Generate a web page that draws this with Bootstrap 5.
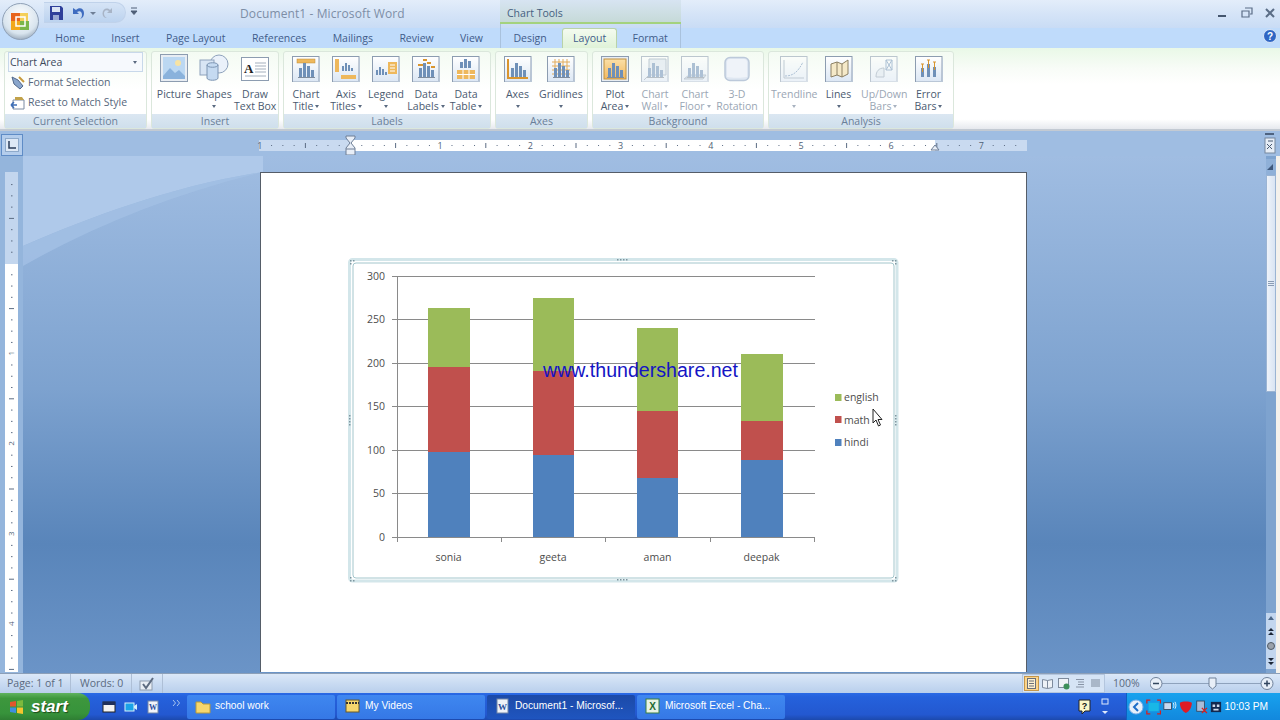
<!DOCTYPE html>
<html lang="en">
<head>
  <meta charset="UTF-8" />
  <title>Document1 - Microsoft Word</title>
  <link href="https://cdn.jsdelivr.net/npm/bootstrap@5.3.3/dist/css/bootstrap.min.css" rel="stylesheet" />
  <style>
    html, body { height: 100%; overflow: hidden; }
    body { font-family: "Open Sans", "Noto Sans", "Liberation Sans", sans-serif; font-size: 10.5px; color: #4a5a70; background: #9dbbe0; }
    .word-win { width: 1280px; height: 720px; position: relative; overflow: hidden; }
    /* title bar */
    .title-row { height: 28px; background: linear-gradient(#e3edfa, #d5e4f7 50%, #c9dcf5); padding-left: 44px; }
    .qat { width: 82px; height: 21px; margin-top: 2px; border-radius: 0 12px 12px 0; background: linear-gradient(#d6e4f6, #bcd3ef); border: 1px solid #c0d2ea; border-left: 0; padding-left: 4px; gap: 5px; }
    .qat-more { width: 14px; margin-left: 2px; margin-top: 7px; }
    .doc-title { margin-left: 98px; width: 260px; font-size: 12px; line-height: 27px; color: #7d8ea6; letter-spacing: .1px; }
    .chart-tools { width: 181px; height: 24px; background: linear-gradient(#d7e4f2, #c6dad8); border-bottom: 2px solid #a4d27e; color: #45607f; padding: 7px 0 0 7px; line-height: 12px; }
    .tools-edge { position: absolute; left: 500px; top: 24px; width: 181px; height: 24px; border-left: 1px solid #a9c2dd; border-right: 1px solid #a9c2dd; pointer-events: none; }
    .win-btns { position: absolute; top: 6px; right: 4px; gap: 10px; }
    .office-btn { position: absolute; left: 2px; top: 3px; width: 37px; height: 37px; }
    /* tabs */
    .tab-row { height: 20px; background: #bfdbfb; padding-left: 42px; }
    .rb-tab { padding: 0 13.2px; line-height: 20px; color: #3f5c8a; font-size: 10.5px; white-space: nowrap; text-decoration: none; }
    .rb-tab.on { background: linear-gradient(#f4fbef, #dff2d8); border: 1px solid #b9d3a8; border-bottom: 0; border-radius: 3px 3px 0 0; line-height: 19px; padding: 0 10.2px; margin: 0 2px; color: #3f5c8a; }
    .help-ico { position: absolute; right: 3px; top: 29px; }
    /* ribbon */
    .ribbon { height: 83px; padding: 3px 0 0 4px; gap: 4px; background: linear-gradient(#e9f8e7, #f8fcf7 25%, #fff 45%, #fff 88%, #e6e9ee); border-bottom: 2px solid #c3cad3; }
    .rb-group { height: 78px; border: 1px solid #dbe7dc; border-radius: 3px; background: linear-gradient(#f4fbf3, #fff 50%); }
    .rb-body { height: 63px; padding-left: 2px; }
    .rb-foot { height: 14px; line-height: 14px; background: linear-gradient(#dbe7f2, #cfdfec); text-align: center; color: #6a7f99; font-size: 10.5px; }
    .g-sel { width: 143px; } .g-ins { width: 128px; } .g-lab { width: 208px; } .g-axe { width: 93px; } .g-bak { width: 172px; } .g-ana { width: 186px; }
    .rb-btn { width: 40px; padding-top: 4px; text-align: center; line-height: 12px; white-space: nowrap; color: #4a5a70; flex: none; }
    .rb-btn svg { display: block; margin: 0 auto 6px; }
    .rb-btn svg.ico-tall { margin-top: -2px; }
    .rb-btn svg.ico-box { margin-top: 1px; margin-bottom: 7px; }
    .rb-44 { width: 44px; } .rb-45 { width: 45px; } .rb-43 { width: 43px; } .rb-42 { width: 42px; }
    .rb-off { color: #9aa6b4; }
    .drop-mark { display: inline-block; border: 2.5px solid transparent; border-top: 3px solid #5a6a80; border-bottom: 0; vertical-align: 2px; margin-left: 2px; }
    .rb-off .drop-mark { border-top-color: #a8b2c0; }
    .sel-box { margin: 0 3px; height: 20px; border: 1px solid #c8d8ea; background: #f6f9fd; line-height: 18px; padding: 0 1px; color: #3d4a5c; font-size: 10.5px; }
    .sel-row { padding: 3px 0 0 5px; height: 20px; line-height: 15px; gap: 2px; color: #56667c; white-space: nowrap; }
    /* ruler row */
    .ruler-row { height: 25px; background: #9fbde2; }
    .tab-stop { width: 22px; height: 22px; margin: 3px 0 0 1px; border: 1px solid #5f8cc6; background: #b4cdec; padding: 3px; }
    .tab-stop-in { width: 14px; height: 14px; background: #dfe9f6; border: 1px solid #8eaacb; }
    .h-ruler { position: absolute; left: 255px; top: 4px; }
    .split-ico { position: absolute; right: 4px; top: 0; }
    /* workspace */
    .workspace { height: 517px; position: relative; background: linear-gradient(#a0bde2, #7da2cf 45%, #5985ba 75%, #6b94c7 100%); }
    .swoosh { position: absolute; left: 23px; top: 0; }
    .left-col { width: 23px; flex: none; background: #94b5dc; padding: 16px 0 0 5px; position: relative; }
    .doc-canvas { width: 1243px; flex: none; position: relative; }
    .doc-page { margin: 16px 0 0 237px; width: 767px; height: 500px; background: #fff; border: 1px solid #555d68; border-bottom: 0; padding: 84px 0 0 86px; }
    .scroll-col { width: 10px; flex: none; background: #7ea3cf; position: relative; }
    .scroll-up { height: 16px; margin-top: 3px; background: #8fb0d8; }
    .scroll-thumb { height: 217px; background: linear-gradient(90deg, #eef3fa, #d9e4f3); border: 1px solid #9bb4d3; }
    .scroll-nav { position: absolute; left: 0; bottom: 4px; width: 10px; height: 56px; background: #c2d6ef; }
    .noise-col { width: 4px; flex: none; background: #f4f1ec; }
    /* status bar */
    .status-row { height: 20px; border-top: 1px solid #8c9fb8; background: linear-gradient(#dce8f8, #c9dbf2 50%, #b9cfec); color: #5a6a80; font-size: 10.5px; line-height: 19px; }
    .st-cell { padding-left: 7px; border-right: 1px solid #aebfd6; }
    .st-page { width: 71px; } .st-words { width: 61px; padding-left: 9px; } .st-check { width: 31px; }
    .st-views { margin-left: auto; height: 19px; width: 83px; gap: 3px; padding: 2px 2px; background: #d6e4f5; border: 1px solid #b4c6de; }
    .view-ico { width: 13px; height: 13px; display: block; }
    .view-ico.on { background: #fcd58b; outline: 1px solid #c6974a; }
    .zoom-txt { width: 37px; margin-left: 8px; }
    /* taskbar */
    .task-row { height: 27px; background: linear-gradient(#2a6ae6, #2561dc 15%, #2358d0 80%, #1c49ad); font-family: "Liberation Sans", sans-serif; color: #fff; font-size: 10.2px; }
    .start-btn { width: 90px; height: 27px; border-radius: 0 12px 12px 0; background: linear-gradient(#5fb35f, #3d973d 20%, #37933b 75%, #2f7e33); font-size: 17px; line-height: 26px; font-style: italic; font-weight: 700; padding-left: 9px; gap: 6px; text-shadow: 1px 1px 1px #1c4a1c; }
    .quick-launch { width: 97px; gap: 8px; padding-left: 12px; }
    .task-btn { width: 148px; height: 24px; margin: 2px 2px 0 0; border-radius: 2px; background: linear-gradient(#3f87f0, #3578e6); padding-left: 8px; gap: 4px; line-height: 22px; white-space: nowrap; }
    .task-btn.on { background: linear-gradient(#1c4aa8, #1f55bf); }
    .tray-left { margin-left: auto; width: 48px; gap: 8px; }
    .tray { width: 154px; height: 27px; background: linear-gradient(#18a2ee, #1288dd); border-left: 1px solid #0f5fc0; padding-left: 1px; gap: 2px; white-space: nowrap; }
    .tray-clock { margin-left: auto; margin-right: 12px; }
  </style>
</head>
<body>
<svg width="0" height="0" class="position-absolute">
  <defs>
    <linearGradient id="frameFill" x1="0" y1="0" x2="0" y2="1"><stop offset="0" stop-color="#fff"/><stop offset="1" stop-color="#dce7f4"/></linearGradient>
    <linearGradient id="hotFill" x1="0" y1="0" x2="0" y2="1"><stop offset="0" stop-color="#fbe0a8"/><stop offset="1" stop-color="#f2b860"/></linearGradient>
    <symbol id="ic-frame" viewBox="0 0 28 26"><rect x=".5" y=".5" width="26.5" height="25" fill="url(#frameFill)" stroke="#8c9cb0"/><path d="M1 25.500h26.500V2" fill="none" stroke="#b9c6d6"/></symbol>
    <symbol id="ic-bars" viewBox="0 0 28 26"><path d="M7 21V12h3v9zM11 21V7h3v14zM15 21V10h3v11zM19 21V14h3v7z" fill="#6f90b8"/><path d="M6 21.500h17" stroke="#7f8c9c"/></symbol>
  </defs>
</svg>

<div class="word-win">
  <!-- title bar -->
  <div class="title-row d-flex">
    <div class="qat d-flex align-items-center">
      <svg width="16" height="16" viewBox="0 0 16 16"><path d="M2 1h11l2 2v12H2z" fill="#2f3f9a"/><path d="M4 2h8v5H4z" fill="#dbe4f4"/><path d="M5 10h6v5H5z" fill="#9aa9d4"/></svg>
      <svg width="16" height="16" viewBox="0 0 16 16"><path d="M4 3v6h6L8 7c3-2 5 0 5 3 0 2-1 3-2 4 3-1 4-3 4-6 0-5-5-6-8-3z" fill="#3f6cc0"/></svg>
      <svg width="6" height="16" viewBox="0 0 6 16"><path d="M0 7h6l-3 3z" fill="#6f7f96"/></svg>
      <svg width="14" height="16" viewBox="0 0 14 16"><path d="M11 3v5H6l2-2C5 4 3 6 3 8.500c0 2 1 3.500 3 4.500-3 0-4.500-2-4.500-4.500C1.500 4 6 2 9 5z" fill="#a8b4c6"/></svg>
    </div>
    <svg class="qat-more" width="14" height="10" viewBox="0 0 14 10"><path d="M3 1h6M3 4h6l-3 3.500z" stroke="#4f5f76" fill="#4f5f76"/></svg>
    <div class="doc-title">Document1 - Microsoft Word</div>
    <div class="chart-tools">Chart Tools</div>
  </div>
  <div class="tools-edge"></div>
  <svg class="office-btn" viewBox="0 0 37 37">
    <defs><radialGradient id="orb" cx=".5" cy=".35" r=".7"><stop offset="0" stop-color="#fff"/><stop offset=".7" stop-color="#d8e4ee"/><stop offset="1" stop-color="#8e9fb2"/></radialGradient></defs>
    <circle cx="18.500" cy="18.500" r="18" fill="url(#orb)" stroke="#8fa0b6"/>
    <path d="M9 10h9v8H9z" fill="#e8641c"/><path d="M18 10h8v8h-8z" fill="#f4c430" opacity=".8"/><path d="M9 18h9v9H9z" fill="#f2a81c"/><path d="M18 18h9v9h-9z" fill="#7ab648"/><path d="M14 14h9v9h-9z" fill="none" stroke="#fff" stroke-width="1.500"/>
  </svg>
  <div class="win-btns d-flex position-absolute">
    <svg width="14" height="14" viewBox="0 0 14 14"><path d="M2 10h8" stroke="#44566e" stroke-width="2"/></svg>
    <svg width="14" height="14" viewBox="0 0 14 14"><path d="M5 2h7v6h-2M2 5h7v6H2z" fill="none" stroke="#5b6d86" stroke-width="1.200"/></svg>
    <svg width="12" height="14" viewBox="0 0 12 14"><path d="M2 3l8 8M10 3l-8 8" stroke="#5b6d86" stroke-width="2"/></svg>
  </div>

  <!-- tabs -->
  <div class="tab-row d-flex">
    <a class="rb-tab">Home</a><a class="rb-tab">Insert</a><a class="rb-tab">Page Layout</a><a class="rb-tab">References</a><a class="rb-tab">Mailings</a><a class="rb-tab">Review</a><a class="rb-tab">View</a><a class="rb-tab ms-1">Design</a><a class="rb-tab on">Layout</a><a class="rb-tab">Format</a>
  </div>
  <svg class="help-ico position-absolute" width="14" height="14" viewBox="0 0 14 14"><circle cx="7" cy="7" r="6.500" fill="#2f66c4" stroke="#dbe6f5"/><text x="7" y="10.500" text-anchor="middle" font-size="10" font-weight="700" fill="#fff" font-family="Liberation Sans">?</text></svg>

  <!-- ribbon -->
  <div class="ribbon d-flex">
    <div class="rb-group g-sel d-flex flex-column">
      <div class="rb-body p-0">
        <div class="sel-box d-flex justify-content-between align-items-center"><span>Chart Area</span><span class="drop-mark me-1"></span></div>
        <div class="sel-row d-flex">
          <svg width="16" height="15" viewBox="0 0 16 15"><path d="M2 2l6 3 5 6-3 3-6-5z" fill="#8aa6cc" stroke="#52688a"/><path d="M9 2l5 5" stroke="#c79a3c" stroke-width="2"/></svg><span>Format Selection</span>
        </div>
        <div class="sel-row d-flex">
          <svg width="16" height="15" viewBox="0 0 16 15"><path d="M3 5h11v9H3z" fill="#fff" stroke="#7a8ba2"/><path d="M5 2h7l2 3H5z" fill="#c2a24a"/><path d="M1 10h6M1 10l3-3M1 10l3 3" stroke="#3c6db5" stroke-width="1.500" fill="none"/></svg><span>Reset to Match Style</span>
        </div>
      </div>
      <div class="rb-foot">Current Selection</div>
    </div>

    <div class="rb-group g-ins d-flex flex-column">
      <div class="rb-body d-flex">
        <div class="rb-btn"><svg class="ico-tall" width="28" height="28" viewBox="0 0 28 28"><rect x=".5" y=".5" width="27" height="27" fill="#e8edf3" stroke="#8c9cb0"/><rect x="3" y="3" width="22" height="22" fill="#bcd8f2"/><circle cx="18" cy="9" r="3" fill="#f7e3a3"/><path d="M3 22l7-8 5 5 4-3 6 6v3H3z" fill="#8ab2dc"/></svg>Picture</div>
        <div class="rb-btn"><svg class="ico-tall" width="30" height="28" viewBox="0 0 30 28"><circle cx="20" cy="10" r="9" fill="#eaf1fa" stroke="#8ea2bc"/><rect x="1" y="6" width="14" height="15" fill="#d8e5f4" stroke="#8ea2bc"/><path d="M8 11c0-3 11-3 11 0v13c0 3-11 3-11 0z" fill="#c5daf1" stroke="#7c94b2"/><path d="M8 11c0 3 11 3 11 0" fill="none" stroke="#7c94b2"/></svg>Shapes<br><span class="drop-mark m-0"></span></div>
        <div class="rb-btn rb-42"><svg class="ico-box" width="28" height="24" viewBox="0 0 28 24"><rect x=".5" y=".5" width="27" height="23" fill="#fff" stroke="#8c9cb0"/><text x="3" y="16" font-size="13" font-weight="700" font-family="Liberation Serif" fill="#222">A</text><path d="M14 6h11M14 9h11M14 12h11M14 15h11M4 19h21" stroke="#a4afbd"/></svg>Draw<br>Text Box</div>
      </div>
      <div class="rb-foot">Insert</div>
    </div>

    <div class="rb-group g-lab d-flex flex-column">
      <div class="rb-body d-flex">
        <div class="rb-btn"><svg width="28" height="26" viewBox="0 0 28 26"><use href="#ic-frame"/><rect x="5" y="3" width="18" height="4" fill="#eeb85c" stroke="#bd8a37" stroke-width=".5"/><use href="#ic-bars"/></svg>Chart<br>Title<span class="drop-mark"></span></div>
        <div class="rb-btn"><svg width="28" height="26" viewBox="0 0 28 26"><use href="#ic-frame"/><rect x="3" y="3" width="4" height="13" fill="#eeb85c"/><rect x="9" y="19" width="15" height="4" fill="#eeb85c"/><path d="M10 15v-5h2v5zM13 15V7h2v8zM16 15v-6h2v6zM19 15v-3h2v3z" fill="#6f90b8"/></svg>Axis<br>Titles<span class="drop-mark"></span></div>
        <div class="rb-btn"><svg width="28" height="26" viewBox="0 0 28 26"><use href="#ic-frame"/><rect x="16" y="6" width="9" height="12" fill="#eeb85c"/><path d="M18 9h5M18 12h5M18 15h5" stroke="#fff"/><path d="M4 19v-5h2v5zM7 19v-8h2v8zM10 19v-6h2v6zM13 19v-3h2v3z" fill="#6f90b8"/></svg>Legend<br><span class="drop-mark m-0"></span></div>
        <div class="rb-btn"><svg width="28" height="26" viewBox="0 0 28 26"><use href="#ic-frame"/><use href="#ic-bars"/><path d="M6 9h5M11 4h4M15 7h4M19 11h4" stroke="#d9952f" stroke-width="2"/></svg>Data<br>Labels<span class="drop-mark"></span></div>
        <div class="rb-btn"><svg width="28" height="26" viewBox="0 0 28 26"><use href="#ic-frame"/><path d="M8 12V6h3v6zM12 12V3h3v9zM16 12V5h3v7z" fill="#6f90b8"/><path d="M5 14h18v9H5z" fill="#eeb85c"/><path d="M5 18.500h18M11 14v9M17 14v9" stroke="#fff"/></svg>Data<br>Table<span class="drop-mark"></span></div>
      </div>
      <div class="rb-foot">Labels</div>
    </div>

    <div class="rb-group g-axe d-flex flex-column">
      <div class="rb-body d-flex p-0">
        <div class="rb-btn rb-43"><svg width="28" height="26" viewBox="0 0 28 26"><use href="#ic-frame"/><use href="#ic-bars"/><path d="M4 3v19h20" fill="none" stroke="#d9952f" stroke-width="2"/></svg>Axes<br><span class="drop-mark m-0"></span></div>
        <div class="rb-btn rb-43"><svg width="28" height="26" viewBox="0 0 28 26"><use href="#ic-frame"/><path d="M5 6h18M5 10h18M5 14h18M5 18h18M8 3v19M12 3v19M16 3v19M20 3v19" stroke="#e3ac5a"/><use href="#ic-bars"/></svg>Gridlines<br><span class="drop-mark m-0"></span></div>
      </div>
      <div class="rb-foot">Axes</div>
    </div>

    <div class="rb-group g-bak d-flex flex-column">
      <div class="rb-body d-flex">
        <div class="rb-btn"><svg width="28" height="26" viewBox="0 0 28 26"><rect x=".5" y=".5" width="27" height="25" fill="#e8edf3" stroke="#8c9cb0"/><rect x="3" y="3" width="22" height="20" fill="url(#hotFill)" stroke="#c0913f"/><use href="#ic-bars"/></svg>Plot<br>Area<span class="drop-mark"></span></div>
        <div class="rb-btn rb-off"><svg width="28" height="26" opacity=".55" viewBox="0 0 28 26"><use href="#ic-frame"/><path d="M3 24l5-5V3h17v16H8" fill="#dbe4ef" stroke="#93a3b6"/><use href="#ic-bars"/></svg>Chart<br>Wall<span class="drop-mark"></span></div>
        <div class="rb-btn rb-off"><svg width="28" height="26" opacity=".55" viewBox="0 0 28 26"><use href="#ic-frame"/><path d="M3 23l5-4h17l-3 4z" fill="#c3d1e1" stroke="#93a3b6"/><use href="#ic-bars"/></svg>Chart<br>Floor<span class="drop-mark"></span></div>
        <div class="rb-btn rb-44 rb-off"><svg width="28" height="26" viewBox="0 0 28 26"><rect x="2" y="1.500" width="24" height="23" rx="5" fill="#dfe7f2" stroke="#bcc9da" stroke-width="1.500"/><path d="M4 6c0-2 1-3 3-3h14c2 0 3 1 3 3v15c-5 1-15 1-20 0z" fill="#eff3f9"/></svg>3-D<br>Rotation</div>
      </div>
      <div class="rb-foot">Background</div>
    </div>

    <div class="rb-group g-ana d-flex flex-column">
      <div class="rb-body d-flex">
        <div class="rb-btn rb-45 rb-off"><svg width="28" height="26" opacity=".55" viewBox="0 0 28 26"><use href="#ic-frame"/><path d="M4 4v18h20" fill="none" stroke="#93a3b6"/><path d="M5 20c8 0 13-4 18-14" fill="none" stroke="#6f90b8" stroke-dasharray="2 1"/></svg>Trendline<br><span class="drop-mark m-0"></span></div>
        <div class="rb-btn rb-45"><svg width="28" height="26" viewBox="0 0 28 26"><use href="#ic-frame"/><path d="M6 8l6-2 5 2 6-4v14l-6 3-5-2-6 2z" fill="#f5e9c8" stroke="#8c8064"/><path d="M12 6v13M17 8v13" stroke="#8c8064"/></svg>Lines<br><span class="drop-mark m-0"></span></div>
        <div class="rb-btn rb-45 rb-off"><svg width="28" height="26" opacity=".55" viewBox="0 0 28 26"><use href="#ic-frame"/><path d="M6 21c0-6 3-9 8-9v9z" fill="#dbe4ef" stroke="#93a3b6"/><path d="M16 4h6v10h-6zM16 4l6 10M22 4l-6 10" fill="none" stroke="#6f90b8"/></svg>Up/Down<br>Bars<span class="drop-mark"></span></div>
        <div class="rb-btn rb-45"><svg width="28" height="26" viewBox="0 0 28 26"><use href="#ic-frame"/><path d="M6 21V12h3v9zM12 21V8h3v13zM18 21V11h3v10z" fill="#6f90b8"/><path d="M7.500 8v8M6 8h3M13.500 4v8M12 4h3M19.500 6v8M18 6h3" stroke="#d9952f"/></svg>Error<br>Bars<span class="drop-mark"></span></div>
      </div>
      <div class="rb-foot">Analysis</div>
    </div>
  </div>

  <!-- horizontal ruler -->
  <div class="ruler-row d-flex position-relative">
    <div class="tab-stop"><div class="tab-stop-in d-flex align-items-center justify-content-center"><svg width="8" height="8" viewBox="0 0 8 8"><path d="M1 0v7h7" fill="none" stroke="#2b3d5a" stroke-width="1.500"/></svg></div></div>
    <svg id="hRuler" class="h-ruler" width="780" height="20" viewBox="255 135 780 20"></svg>
    <svg class="split-ico" width="12" height="25" viewBox="0 0 12 25"><path d="M1 3h9" stroke="#33465f" stroke-width="1.500"/><rect x="1" y="7" width="10" height="15" fill="#e6edf6" stroke="#77889e"/><path d="M4 10h5M3 13l5 5M8 13l-5 5" stroke="#4a5c74"/></svg>
  </div>

  <!-- document area -->
  <div class="workspace d-flex">
    <svg class="swoosh" width="240" height="110" viewBox="0 0 240 110"><path d="M0 0H240V16C150 30 70 60 0 90z" fill="#afc9ea"/><path d="M0 90C70 60 150 30 240 16C150 38 70 70 0 110z" fill="#a2bfe4" opacity=".85"/></svg>
    <div class="left-col"><svg id="vRuler" width="14" height="500" viewBox="5 172 14 500"></svg></div>
    <div class="doc-canvas">
      <div class="doc-page">
        <svg width="553" height="327" viewBox="347 257 553 327" font-family="Open Sans, Noto Sans, sans-serif" font-size="10.5" fill="#4d4d4d">
          <!-- selection frame -->
          <rect x="349.500" y="259.500" width="547.500" height="321.500" rx="3" fill="none" stroke="#d3e6ea" stroke-width="3"/>
          <rect x="353" y="263" width="541" height="315" rx="3" fill="none" stroke="#a3c6cc"/>
          <g fill="#7f96a0">
            <path d="M617 259h1.500v1.500H617zM620 259h1.500v1.500H620zM623 259h1.500v1.500H623zM626 259h1.500v1.500H626z"/>
            <path d="M617 579h1.500v1.500H617zM620 579h1.500v1.500H620zM623 579h1.500v1.500H623zM626 579h1.500v1.500H626z"/>
            <path d="M349 415h1.500v1.500H349zM349 418h1.500v1.500H349zM349 421h1.500v1.500H349zM349 424h1.500v1.500H349z"/>
            <path d="M895 415h1.500v1.500H895zM895 418h1.500v1.500H895zM895 421h1.500v1.500H895zM895 424h1.500v1.500H895z"/>
            <path d="M350 260h1.500v1.500H350zM353 260h1.500v1.500H353zM350 263h1.500v1.500H350zM892 260h1.500v1.500H892zM895 260h1.500v1.500H895zM895 263h1.500v1.500H895zM350 577h1.500v1.500H350zM350 580h1.500v1.500H350zM353 580h1.500v1.500H353zM895 577h1.500v1.500H895zM895 580h1.500v1.500H895zM892 580h1.500v1.500H892z"/>
          </g>
          <!-- gridlines and axes -->
          <g stroke="#8a8a8a" fill="none">
            <path d="M392 276.500h423M392 319.500h423M392 363.500h423M392 406.500h423M392 450.500h423M392 493.500h423"/>
            <path d="M397.500 276v266M392 537.500h423M501.500 537v5M605.500 537v5M710.500 537v5M814.500 537v5"/>
          </g>
          <!-- stacked bars -->
          <g fill="#4f81bd"><rect x="428" y="452" width="42" height="85"/><rect x="533" y="455" width="41" height="82"/><rect x="637" y="478" width="41" height="59"/><rect x="741" y="460" width="42" height="77"/></g>
          <g fill="#c0504d"><rect x="428" y="367" width="42" height="85"/><rect x="533" y="371" width="41" height="84"/><rect x="637" y="411" width="41" height="67"/><rect x="741" y="421" width="42" height="39"/></g>
          <g fill="#9bbb59"><rect x="428" y="308" width="42" height="59"/><rect x="533" y="298" width="41" height="73"/><rect x="637" y="328" width="41" height="83"/><rect x="741" y="354" width="42" height="67"/></g>
          <g text-anchor="end"><text x="385" y="280">300</text><text x="385" y="323">250</text><text x="385" y="367">200</text><text x="385" y="410">150</text><text x="385" y="454">100</text><text x="385" y="497">50</text><text x="385" y="541">0</text></g>
          <g text-anchor="middle"><text x="448.500" y="561">sonia</text><text x="553" y="561">geeta</text><text x="657.500" y="561">aman</text><text x="761.500" y="561">deepak</text></g>
          <rect x="835" y="394" width="6.500" height="7" fill="#9bbb59"/><text x="844" y="401">english</text>
          <rect x="835" y="416" width="6.500" height="7" fill="#c0504d"/><text x="844" y="424">math</text>
          <rect x="835" y="439" width="6.500" height="7" fill="#4f81bd"/><text x="844" y="446">hindi</text>
          <text x="543" y="377" font-family="Liberation Sans, sans-serif" font-size="19.600" fill="#1414c4">www.thundershare.net</text>
          <path d="M873 409v14l3-3 2.500 6 2-1-2.500-5.500h4z" fill="#fff" stroke="#222"/>
        </svg>
      </div>
    </div>
    <div class="scroll-col">
      <div class="scroll-up d-flex justify-content-center align-items-center"><svg width="8" height="6" viewBox="0 0 8 6"><path d="M0 6l6-6v6z" fill="#3f587c"/></svg></div>
      <div class="scroll-thumb d-flex align-items-center justify-content-center"><svg width="6" height="5" viewBox="0 0 6 5"><path d="M0 .5h6M0 2.500h6M0 4.500h6" stroke="#8a9cb4"/></svg></div>
      <div class="scroll-nav d-flex flex-column align-items-center justify-content-between pb-1">
        <svg width="8" height="8" viewBox="0 0 8 8"><path d="M4 3l3 4H1z" fill="#4c6788"/></svg>
        <svg width="8" height="8" viewBox="0 0 8 8"><path d="M4 0l3 3H1zM4 4l3 3H1z" fill="#1c2738"/></svg>
        <svg width="8" height="8" viewBox="0 0 8 8"><circle cx="4" cy="4" r="3.500" fill="#9aa2ac" stroke="#4f5964"/></svg>
        <svg width="8" height="8" viewBox="0 0 8 8"><path d="M4 4L1 1h6zM4 8L1 5h6z" fill="#1c2738"/></svg>
      </div>
    </div>
    <div class="noise-col"></div>
  </div>

  <!-- status bar -->
  <div class="status-row d-flex">
    <div class="st-cell st-page">Page: 1 of 1</div>
    <div class="st-cell st-words">Words: 0</div>
    <div class="st-cell st-check d-flex align-items-center"><svg width="16" height="16" viewBox="0 0 16 16"><rect x="1" y="5" width="12" height="9" fill="#e8edf4" stroke="#8e9cae"/><path d="M4 8l3 4 7-10" fill="none" stroke="#5d6b80" stroke-width="2"/></svg></div>
    <div class="st-views d-flex">
      <svg class="view-ico on" viewBox="0 0 13 13"><rect x="2.500" y="1.500" width="8" height="10" fill="#fdf0cf" stroke="#6b6f78"/><path d="M4 4h5M4 6.500h5M4 9h5" stroke="#6b6f78"/></svg>
      <svg class="view-ico" viewBox="0 0 13 13"><path d="M1.500 2.500l5 1 5-1v8l-5 1-5-1zM6.500 3.500v8" fill="#eef2f7" stroke="#7d8a9c"/></svg>
      <svg class="view-ico" viewBox="0 0 13 13"><rect x="1.500" y="1.500" width="10" height="9" fill="#eef2f7" stroke="#7d8a9c"/><circle cx="9.500" cy="9.500" r="3" fill="#3c8f5a"/></svg>
      <svg class="view-ico" viewBox="0 0 13 13"><path d="M3 2.500h8M5 5h6M5 7.500h6M3 10h8" stroke="#8894a6"/></svg>
      <svg class="view-ico" viewBox="0 0 13 13"><path d="M2 3h9M2 5h9M2 7h9M2 9h9" stroke="#7d8a9c"/></svg>
    </div>
    <div class="zoom-txt">100%</div>
    <svg width="130" height="19" viewBox="0 0 130 19">
      <path d="M12 9.500h100" stroke="#8ea2bc"/>
      <circle cx="6" cy="9.500" r="6" fill="#e8eff8" stroke="#6f819a"/><path d="M3 9.500h6" stroke="#33465f" stroke-width="1.500"/>
      <path d="M59 4h7v8l-3.500 3-3.500-3z" fill="#e8eff8" stroke="#6f819a"/>
      <circle cx="117" cy="9.500" r="6" fill="#e8eff8" stroke="#6f819a"/><path d="M114 9.500h6M117 6.500v6" stroke="#33465f" stroke-width="1.500"/>
    </svg>
  </div>

  <!-- taskbar -->
  <div class="task-row d-flex">
    <div class="start-btn d-flex align-items-center">
      <svg width="16" height="16" viewBox="0 0 16 16"><path d="M1 3l6-1v5.500H1z" fill="#e2562d"/><path d="M8 2l6-1v6.500H8z" fill="#7db93d"/><path d="M1 8.500h6V14l-6-1z" fill="#3f8fe0"/><path d="M8 8.500h6V15l-6-1z" fill="#f5c52e"/></svg>
      <span>start</span>
    </div>
    <div class="quick-launch d-flex align-items-center">
      <svg width="14" height="14" viewBox="0 0 14 14"><rect x="1" y="2" width="12" height="10" fill="#f3f3f3" stroke="#222"/><rect x="1" y="2" width="12" height="3" fill="#1f2f5a"/></svg>
      <svg width="14" height="14" viewBox="0 0 14 14"><rect x="1" y="3" width="9" height="8" fill="#1aa3e8" stroke="#d8f0fa"/><path d="M10 6l3-2v6l-3-2z" fill="#d8f0fa"/></svg>
      <svg width="14" height="14" viewBox="0 0 14 14"><rect x="2" y="1" width="10" height="12" fill="#f2f5fa" stroke="#7386a6"/><text x="7" y="10" text-anchor="middle" font-size="8" font-weight="700" fill="#2b4f9a" font-family="Liberation Serif">W</text></svg>
      <svg width="9" height="8" viewBox="0 0 9 8" class="ms-1 mb-2"><path d="M1 1l2.500 3L1 7M5 1l2.500 3L5 7" fill="none" stroke="#a8c4ee"/></svg>
    </div>
    <div class="task-btn d-flex"><svg width="16" height="22" viewBox="0 0 16 22"><path d="M1 7h5l2 2h7v9H1z" fill="#f5d76e" stroke="#b79a3a"/></svg><span>school work</span></div>
    <div class="task-btn d-flex"><svg width="16" height="22" viewBox="0 0 16 22"><rect x="1" y="5" width="13" height="12" fill="#f5d76e" stroke="#6a5a2a"/><path d="M1 8h13" stroke="#333" stroke-width="2" stroke-dasharray="2 1"/></svg><span>My Videos</span></div>
    <div class="task-btn on d-flex"><svg width="16" height="22" viewBox="0 0 16 22"><rect x="2" y="4" width="11" height="14" fill="#eef2f8" stroke="#7386a6"/><text x="7.500" y="15" text-anchor="middle" font-size="9" font-weight="700" fill="#2b4f9a" font-family="Liberation Serif">W</text></svg><span>Document1 - Microsof...</span></div>
    <div class="task-btn d-flex"><svg width="16" height="22" viewBox="0 0 16 22"><rect x="1" y="4" width="13" height="14" fill="#e7f3e4" stroke="#3a7f42"/><text x="7.500" y="15" text-anchor="middle" font-size="10" font-weight="700" fill="#1e6a30" font-family="Liberation Sans">X</text></svg><span>Microsoft Excel - Cha...</span></div>
    <div class="tray-left d-flex align-items-center">
      <svg width="14" height="16" viewBox="0 0 14 16"><path d="M1 1h11v11H7l-3 3v-3H1z" fill="#fbf6c8" stroke="#222"/><text x="6.500" y="10" text-anchor="middle" font-size="9" font-weight="700" fill="#111" font-family="Liberation Sans">?</text></svg>
      <svg width="10" height="18" viewBox="0 0 10 18"><rect x="2" y="1" width="6" height="5" fill="none" stroke="#dfe9fb"/><path d="M2 13h6l-3 3z" fill="#dfe9fb"/></svg>
    </div>
    <div class="tray d-flex align-items-center">
      <svg width="16" height="16" viewBox="0 0 16 16" class="flex-shrink-0"><circle cx="8" cy="8" r="7" fill="#e6f0fb" stroke="#7fb0e8"/><path d="M10 4L6 8l4 4" fill="none" stroke="#1c6dc8" stroke-width="2"/></svg>
      <svg width="18" height="18" viewBox="0 0 18 18"><rect x="3" y="4" width="12" height="10" fill="#19b7e6"/><path d="M1 5V1h4M13 1h4v4M1 13v4h4M17 13v4h-4" fill="none" stroke="#d61f1f" stroke-width="1.500"/></svg>
      <svg width="16" height="16" viewBox="0 0 16 16"><rect x="1" y="3" width="9" height="8" fill="#c8d8ee" stroke="#33465f"/><path d="M12 3c1 2 1 4 0 6M14 2c1.500 3 1.500 5 0 8" fill="none" stroke="#fff"/></svg>
      <svg width="16" height="16" viewBox="0 0 16 16"><path d="M1 3c3-2 11-2 14 0 0 6-3 10-7 12C4 13 1 9 1 3z" fill="#e01b24"/></svg>
      <svg width="16" height="16" viewBox="0 0 16 16"><rect x="2" y="1" width="9" height="12" fill="#a9bcd8" stroke="#33465f"/><path d="M8 9l6 6M14 9l-6 6" stroke="#d61f1f" stroke-width="1.500"/></svg>
      <svg width="14" height="14" viewBox="0 0 14 14"><rect x="1" y="1" width="12" height="12" fill="#12284f"/><path d="M3 4h3v3H3zM8 4h3v3H8zM4 9h6v2H4z" fill="#cfd9ea"/></svg>
      <span class="tray-clock">10:03 PM</span>
    </div>
  </div>
</div>

<script>
  // build the ruler ticks, 90.2px to the inch with 0 at x=350
  const NS = "http://www.w3.org/2000/svg";
  function add(svg, tag, attrs, text) {
    const el = document.createElementNS(NS, tag);
    for (const k in attrs) el.setAttribute(k, attrs[k]);
    if (text) el.textContent = text;
    svg.appendChild(el);
  }

  const h = document.getElementById("hRuler");
  add(h, "rect", { x: 259, y: 140, width: 768, height: 11, fill: "#c9daf0" });
  add(h, "rect", { x: 350, y: 140, width: 585, height: 11, fill: "#fff" });
  for (let i = -8; i <= 75; i++) {
    const x = 350 + i * 11.275;
    if (x < 258 || x > 1026 || i === 0) continue;
    if (i % 8 === 0) {
      add(h, "text", { x: x, y: 148.5, "text-anchor": "middle", "font-size": 9, fill: "#4f5f76", "font-family": "Open Sans" }, String(Math.abs(i / 8)));
    } else {
      const long = i % 4 === 0;
      add(h, "rect", { x: x, y: long ? 143 : 145, width: 1, height: long ? 5 : 1, fill: "#5d6d84" });
    }
  }
  // indent markers
  add(h, "path", { d: "M346 136h9v2l-4 5 4 5v7h-9v-7l4-5-4-5z", fill: "#e8eef7", stroke: "#6e7f96" });
  add(h, "path", { d: "M346 149h9", stroke: "#6e7f96" });
  add(h, "path", { d: "M931 150l4-5 4 5z", fill: "#e8eef7", stroke: "#6e7f96" });

  const v = document.getElementById("vRuler");
  add(v, "rect", { x: 5, y: 172, width: 13, height: 92, fill: "#c3d6ee" });
  add(v, "rect", { x: 5, y: 264, width: 13, height: 408, fill: "#fff" });
  for (let i = -8; i <= 36; i++) {
    const y = 263 + i * 11.275;
    if (y < 173 || y > 670 || i === 0) continue;
    if (i % 8 === 0 && i > 0) {
      add(v, "text", { x: 11.5, y: y + 3, "text-anchor": "middle", "font-size": 8, fill: "#4f5f76", "font-family": "Open Sans", transform: "rotate(-90 11.5 " + y + ")" }, String(i / 8));
    } else {
      const long = i % 4 === 0;
      add(v, "rect", { x: long ? 9 : 11, y: y, width: long ? 5 : 1.5, height: 1, fill: "#5d6d84" });
    }
  }
</script>
<script src="https://cdn.jsdelivr.net/npm/bootstrap@5.3.3/dist/js/bootstrap.bundle.min.js"></script>
</body>
</html>
